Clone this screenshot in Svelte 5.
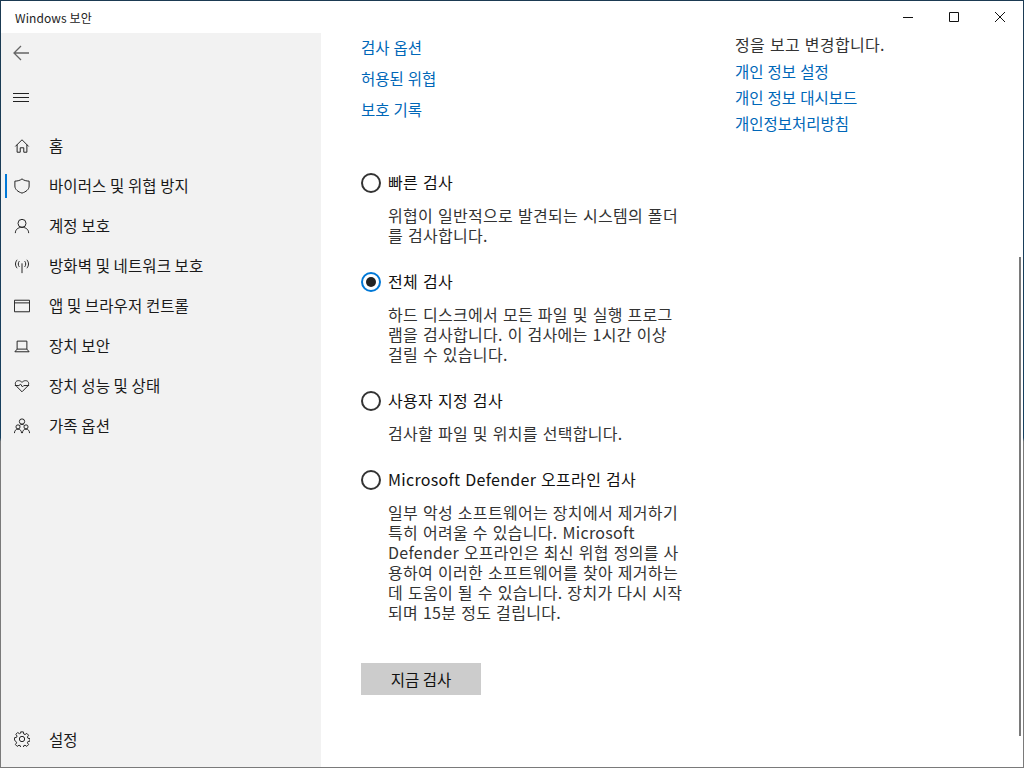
<script>
  const navItems = [
    { id: 'home', label: '홈' },
    { id: 'shield', label: '바이러스 및 위협 방지', active: true },
    { id: 'person', label: '계정 보호' },
    { id: 'antenna', label: '방화벽 및 네트워크 보호' },
    { id: 'browser', label: '앱 및 브라우저 컨트롤' },
    { id: 'laptop', label: '장치 보안' },
    { id: 'heart', label: '장치 성능 및 상태' },
    { id: 'family', label: '가족 옵션' }
  ]

  const scanLinks = ['검사 옵션', '허용된 위협', '보호 기록']
  const privacyLinks = ['개인 정보 설정', '개인 정보 대시보드', '개인정보처리방침']

  const scanTypes = [
    { label: '빠른 검사', desc: ['위협이 일반적으로 발견되는 시스템의 폴더', '를 검사합니다.'] },
    { label: '전체 검사', checked: true, desc: ['하드 디스크에서 모든 파일 및 실행 프로그', '램을 검사합니다. 이 검사에는 1시간 이상', '걸릴 수 있습니다.'] },
    { label: '사용자 지정 검사', desc: ['검사할 파일 및 위치를 선택합니다.'] },
    {
      label: 'Microsoft Defender 오프라인 검사',
      desc: [
        '일부 악성 소프트웨어는 장치에서 제거하기',
        '특히 어려울 수 있습니다. Microsoft',
        'Defender 오프라인은 최신 위협 정의를 사',
        '용하여 이러한 소프트웨어를 찾아 제거하는',
        '데 도움이 될 수 있습니다. 장치가 다시 시작',
        '되며 15분 정도 걸립니다.'
      ]
    }
  ]
</script>

<div class="window">
  <div class="inner">
    <header class="titlebar">
      <span class="app-name">Windows 보안</span>
      <div class="controls">
        <svg width="46" height="32" viewBox="0 0 46 32"><path d="M18 16.500h10" /></svg>
        <svg width="46" height="32" viewBox="0 0 46 32"><path d="M18.500 11.500h9v9h-9z" /></svg>
        <svg width="46" height="32" viewBox="0 0 46 32"><path d="M18 11l10 10M28 11L18 21" /></svg>
      </div>
    </header>

    <div class="body">
      <aside class="sidebar">
        <button class="tool back" aria-label="뒤로">
          <svg width="16" height="16" viewBox="0 0 16 16"><path d="M16 8H1M8 1L1 8l7 7" /></svg>
        </button>
        <button class="tool menu" aria-label="메뉴">
          <svg width="16" height="10" viewBox="0 0 16 10"><path d="M0 .5h16M0 4.500h16M0 8.500h16" /></svg>
        </button>

        <nav class="nav">
          {#each navItems as item}
            <div class="nav-item" class:active={item.active}>
              <span class="nav-icon">
                <svg width="16" height="16" viewBox="0 0 18 18">
                  {#if item.id === 'home'}
                    <path d="M1.500 9.500L9 2l7.500 7.500M3.500 7.500V16h3.500v-5h4v5h3.500V7.500" />
                  {:else if item.id === 'shield'}
                    <path d="M9 1c2 1.700 5 2.500 8 2.500v5.500c0 4-3.500 6.500-8 8-4.500-1.500-8-4-8-8V3.500c3 0 6-.8 8-2.500z" />
                  {:else if item.id === 'person'}
                    <circle cx="9" cy="6" r="4.500" /><path d="M1.500 17c0-4 3-6.500 7.500-6.500s7.500 2.500 7.500 6.500" />
                  {:else if item.id === 'antenna'}
                    <path d="M9 6v11M6 3.500c-1.600 2-1.600 4.500 0 6.500M12 3.500c1.600 2 1.600 4.500 0 6.500M3.500 2c-2.400 3-2.400 6.500 0 9.500M14.500 2c2.400 3 2.400 6.500 0 9.500" />
                  {:else if item.id === 'browser'}
                    <path d="M.5 2.500h17v13H.5zM.5 5.500h17" />
                  {:else if item.id === 'laptop'}
                    <path d="M3.500 3.500h11v9h-11zM3.500 12.500L1 15.500h16l-2.500-3" />
                  {:else if item.id === 'heart'}
                    <path d="M9 15.500L2.500 9C.5 6.500 1.500 3 5 3c2 0 3 1 4 2 1-1 2-2 4-2 3.500 0 4.500 3.500 2.500 6L9 15.500zM1 8.500h4.500L7.500 7l2 3 1.500-1.500H17" />
                  {:else if item.id === 'family'}
                    <circle cx="9" cy="4" r="3" /><circle cx="4.500" cy="10" r="2.300" /><circle cx="13.500" cy="10" r="2.300" /><path d="M.5 17c0-2.500 1.500-4.500 4-4.500s4 2 4 4.500M9.500 17c0-2.500 1.500-4.500 4-4.500s4 2 4 4.500M6.500 8.500C7 7.500 8 7 9 7s2 .5 2.500 1.500" />
                  {/if}
                </svg>
              </span>
              <span class="nav-label">{item.label}</span>
            </div>
          {/each}
        </nav>

        <div class="nav-item settings">
          <span class="nav-icon">
            <svg width="16" height="16" viewBox="0 0 18 18">
              <circle cx="9" cy="9" r="3" />
              <path d="M7.500 1h3l.4 2.300 1.500.7 2-1.300 2 2-1.300 2 .6 1.500 2.300.4v2.800l-2.300.4-.6 1.500 1.300 2-2 2-2-1.300-1.500.6-.4 2.300h-3l-.4-2.300-1.500-.6-2 1.300-2-2 1.300-2-.6-1.500L.5 10.400V7.600l2.300-.4.6-1.500-1.300-2 2-2 2 1.300 1.500-.7z" />
            </svg>
          </span>
          <span class="nav-label">설정</span>
        </div>
      </aside>

      <main class="content">
        <section class="main-col">
          <div class="links">
            {#each scanLinks as link}
              <span class="link">{link}</span>
            {/each}
          </div>

          <div class="scan-types">
            {#each scanTypes as scan}
              <div class="scan">
                <div class="scan-head">
                  <span class="radio" class:checked={scan.checked}></span>
                  <span class="scan-label">{scan.label}</span>
                </div>
                <p class="scan-desc">
                  {#each scan.desc as line}
                    <span>{line}</span>
                  {/each}
                </p>
              </div>
            {/each}
          </div>

          <button class="scan-now">지금 검사</button>
        </section>

        <section class="side-col">
          <p class="side-text">정을 보고 변경합니다.</p>
          {#each privacyLinks as link}
            <span class="link">{link}</span>
          {/each}
        </section>

        <div class="scrollbar"></div>
      </main>
    </div>
  </div>
</div>

<style>
  :global(body) {
    margin: 0;
  }

  .window {
    box-sizing: border-box;
    width: 1024px;
    height: 768px;
    padding: 1px;
    background: linear-gradient(to bottom, #1b3a52 0, #17405f 57%, #7a7a7a 57.500%, #7a7a7a 100%);
    font-family: "Noto Sans CJK KR", "Noto Sans", sans-serif;
    color: #000;
    overflow: hidden;
  }

  .inner {
    height: 100%;
    background: #fff;
    display: flex;
    flex-direction: column;
  }

  .titlebar {
    height: 32px;
    flex: none;
    display: flex;
    align-items: center;
    justify-content: space-between;
  }

  .app-name {
    padding-left: 14px;
    font-size: 12px;
    letter-spacing: 0.1px;
    color: #222;
  }

  .controls {
    display: flex;
    height: 32px;
  }

  .controls svg {
    display: block;
    fill: none;
    stroke: #111;
    stroke-width: 1;
  }

  .body {
    flex: 1;
    display: flex;
    min-height: 0;
  }

  .sidebar {
    width: 320px;
    flex: none;
    background: #f2f2f2;
    display: flex;
    flex-direction: column;
  }

  .tool {
    display: block;
    border: none;
    background: none;
    padding: 0 0 0 12px;
    height: 16px;
    text-align: left;
  }

  .tool svg {
    display: block;
    fill: none;
    stroke-width: 1;
  }

  .back {
    margin-top: 12px;
  }

  .back svg {
    stroke: #666;
    stroke-width: 1.300;
  }

  .menu {
    margin-top: 32px;
    height: 10px;
  }

  .menu svg {
    stroke: #222;
  }

  .nav {
    margin-top: 23px;
    display: flex;
    flex-direction: column;
    flex: 1;
  }

  .nav-item {
    position: relative;
    display: flex;
    align-items: center;
    height: 40px;
    flex: none;
    font-size: 15.500px;
    letter-spacing: 0.1px;
    color: #1a1a1a;
  }

  .nav-item.active::before {
    content: "";
    position: absolute;
    left: 4px;
    top: 8px;
    width: 2px;
    height: 24px;
    background: #0078d7;
  }

  .nav-icon {
    width: 48px;
    padding-left: 13px;
    box-sizing: border-box;
    display: flex;
    flex: none;
  }

  .nav-icon svg {
    display: block;
    fill: none;
    stroke: #222;
    stroke-width: 1.100;
  }

  .nav-label {
    padding-bottom: 2px;
  }

  .settings {
    margin-bottom: 8px;
  }

  .settings .nav-label {
    padding-bottom: 0;
  }

  .content {
    position: relative;
    flex: 1;
    display: flex;
    background: #fff;
    overflow: hidden;
  }

  .main-col {
    width: 414px;
    flex: none;
    box-sizing: border-box;
    padding-left: 40px;
  }

  .links {
    display: flex;
    flex-direction: column;
    gap: 11px;
    padding-top: 4px;
  }

  .link {
    display: block;
    height: 20px;
    line-height: 20px;
    color: #0067b8;
    font-size: 15.500px;
    word-spacing: 0.6px;
  }

  .scan-types {
    margin-top: 54px;
    display: flex;
    flex-direction: column;
    gap: 27px;
  }

  .scan-head {
    display: flex;
    align-items: center;
    gap: 7px;
    height: 20px;
    font-size: 16px;
    line-height: 20px;
    letter-spacing: 0.3px;
    word-spacing: 1px;
    color: #111;
  }

  .scan-label {
    padding-bottom: 2px;
  }

  .radio {
    position: relative;
    box-sizing: border-box;
    width: 20px;
    height: 20px;
    border: 2px solid #333;
    border-radius: 50%;
    flex: none;
  }

  .radio.checked {
    border-color: #0078d7;
  }

  .radio.checked::after {
    content: "";
    position: absolute;
    left: 3px;
    top: 3px;
    width: 10px;
    height: 10px;
    border-radius: 50%;
    background: #222;
  }

  .scan-desc {
    margin: 12px 0 0 27px;
    font-size: 16px;
    letter-spacing: 0.3px;
    word-spacing: 1px;
    line-height: 20px;
    color: #333;
    white-space: nowrap;
  }

  .scan-desc span {
    display: block;
  }

  .scan-now {
    display: block;
    margin-top: 41px;
    width: 120px;
    height: 32px;
    border: none;
    background: #ccc;
    color: #111;
    font-family: inherit;
    font-size: 15.500px;
    padding: 0;
  }

  .side-col {
    padding-top: 1px;
    display: flex;
    flex-direction: column;
    gap: 6px;
  }

  .side-text {
    margin: 0 0 1px;
    font-size: 16px;
    letter-spacing: 0.3px;
    word-spacing: 1px;
    line-height: 20px;
    color: #333;
  }

  .scrollbar {
    position: absolute;
    right: 2px;
    top: 224px;
    width: 2px;
    height: 479px;
    background: #7a7a7a;
  }
</style>
